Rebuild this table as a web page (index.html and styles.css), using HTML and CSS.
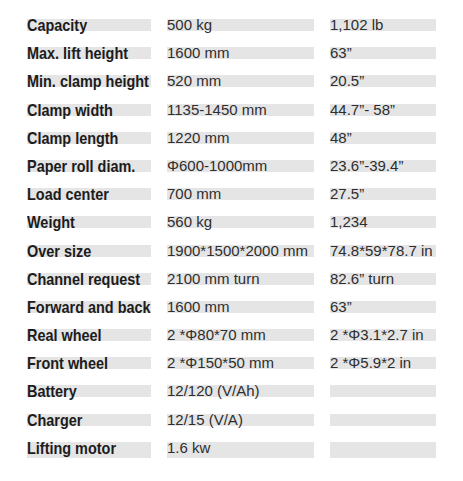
FILE: index.html
```html
<!DOCTYPE html>
<html>
<head>
<meta charset="utf-8">
<link rel="stylesheet" href="styles.css">
</head>
<body>
<div class="specs">
  <div class="cell label"><span>Capacity</span></div><div class="cell">500 kg</div><div class="cell">1,102 lb</div>
  <div class="cell label"><span>Max. lift height</span></div><div class="cell">1600 mm</div><div class="cell">63”</div>
  <div class="cell label"><span>Min. clamp height</span></div><div class="cell">520 mm</div><div class="cell">20.5”</div>
  <div class="cell label"><span>Clamp width</span></div><div class="cell">1135-1450 mm</div><div class="cell">44.7”- 58”</div>
  <div class="cell label"><span>Clamp length</span></div><div class="cell">1220 mm</div><div class="cell">48”</div>
  <div class="cell label"><span>Paper roll diam.</span></div><div class="cell">Φ600-1000mm</div><div class="cell">23.6”-39.4”</div>
  <div class="cell label"><span>Load center</span></div><div class="cell">700 mm</div><div class="cell">27.5”</div>
  <div class="cell label"><span>Weight</span></div><div class="cell">560 kg</div><div class="cell">1,234</div>
  <div class="cell label"><span>Over size</span></div><div class="cell">1900*1500*2000 mm</div><div class="cell">74.8*59*78.7 in</div>
  <div class="cell label"><span>Channel request</span></div><div class="cell">2100 mm turn</div><div class="cell">82.6” turn</div>
  <div class="cell label"><span>Forward and back</span></div><div class="cell">1600 mm</div><div class="cell">63”</div>
  <div class="cell label"><span>Real wheel</span></div><div class="cell">2 *Φ80*70 mm</div><div class="cell">2 *Φ3.1*2.7 in</div>
  <div class="cell label"><span>Front wheel</span></div><div class="cell">2 *Φ150*50 mm</div><div class="cell">2 *Φ5.9*2 in</div>
  <div class="cell label"><span>Battery</span></div><div class="cell">12/120 (V/Ah)</div><div class="cell"></div>
  <div class="cell label"><span>Charger</span></div><div class="cell">12/15 (V/A)</div><div class="cell"></div>
  <div class="cell label last"><span>Lifting motor</span></div><div class="cell last">1.6 kw</div><div class="cell last"></div>
</div>
</body>
</html>
```
FILE: styles.css
```css
html, body {
  margin: 0;
  padding: 0;
  background: #ffffff;
}
body {
  padding: 19px 0 0 27px;
}
.specs {
  display: grid;
  grid-template-columns: 124px 147px 106px;
  column-gap: 16px;
  row-gap: 16.2px;
}
.cell {
  height: 12px;
  background: #e5e5e5;
  font-family: "Liberation Sans", Arial, sans-serif;
  font-size: 15px;
  line-height: 12px;
  color: #2e2e2e;
  white-space: nowrap;
}
.cell.last {
  height: 16px;
}
.label {
  font-size: 16.5px;
  font-weight: bold;
  color: #1c1c1c;
}
.label span {
  display: inline-block;
  transform: scaleX(0.875);
  transform-origin: left center;
}
```
